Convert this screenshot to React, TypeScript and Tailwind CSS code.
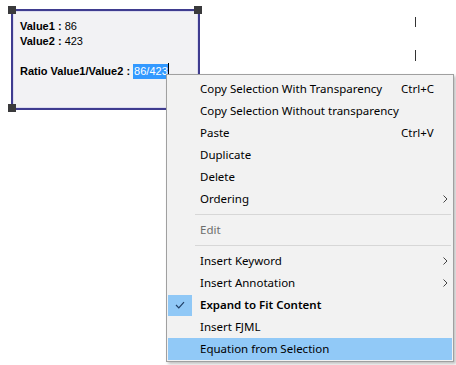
import React from "react";

type Item =
  | { kind: "item"; label: string; shortcut?: string; sub?: boolean; disabled?: boolean; bold?: boolean; checked?: boolean; active?: boolean }
  | { kind: "sep" };

const items: Item[] = [
  { kind: "item", label: "Copy Selection With Transparency", shortcut: "Ctrl+C" },
  { kind: "item", label: "Copy Selection Without transparency" },
  { kind: "item", label: "Paste", shortcut: "Ctrl+V" },
  { kind: "item", label: "Duplicate" },
  { kind: "item", label: "Delete" },
  { kind: "item", label: "Ordering", sub: true },
  { kind: "sep" },
  { kind: "item", label: "Edit", disabled: true },
  { kind: "sep" },
  { kind: "item", label: "Insert Keyword", sub: true },
  { kind: "item", label: "Insert Annotation", sub: true },
  { kind: "item", label: "Expand to Fit Content", bold: true, checked: true },
  { kind: "item", label: "Insert FJML" },
  { kind: "item", label: "Equation from Selection", active: true },
];

function Chevron() {
  return (
    <svg width="5" height="8" viewBox="0 0 5 8" className="absolute right-[4px] top-[7px]">
      <path d="M0.5 0.5 L4 4 L0.5 7.5" fill="none" stroke="#444" strokeWidth="1" />
    </svg>
  );
}

function Check() {
  return (
    <div className="w-[24px] h-[21px] bg-[#90c8f6] flex items-center justify-center">
      <svg width="10" height="8" viewBox="0 0 10 8">
        <path d="M1 4 L3.8 6.8 L9 1.2" fill="none" stroke="#1f3f66" strokeWidth="1.2" />
      </svg>
    </div>
  );
}

function Handle({ cls }: { cls: string }) {
  return <div className={`absolute w-[8px] h-[8px] bg-[#3a3a3c] ${cls}`} />;
}

export default function App() {
  return (
    <div
      className="relative w-[456px] h-[365px] bg-white overflow-hidden"
      style={{ fontFamily: "'Liberation Sans', Arial, sans-serif" }}
    >
      {/* text box on canvas */}
      <div className="absolute left-[11px] top-[9px] w-[189px] h-[101px] border-2 border-[#3f3c8f] bg-[#f2f2f4]">
        <div className="absolute inset-0 border border-[#dcdcee]" />
        <div className="relative pl-[7px] pt-[8px] text-[11px] leading-[15px] text-black">
          <div>
            <span className="font-bold">Value1 :</span> 86
          </div>
          <div>
            <span className="font-bold">Value2 :</span> 423
          </div>
          <div className="h-[15px]" />
          <div className="flex items-center">
            <span className="font-bold whitespace-pre">Ratio Value1/Value2 : </span>
            <span className="bg-[#3399ff] text-white leading-[15px] pl-[1px]">86/423</span>
            <span className="w-px h-[14px] bg-black -mt-[4px]" />
          </div>
        </div>
      </div>
      <Handle cls="left-[8px] top-[6px]" />
      <Handle cls="left-[194px] top-[6px]" />
      <Handle cls="left-[8px] top-[104px]" />

      {/* stray cursor marks */}
      <div className="absolute left-[415px] top-[17px] w-px h-[10px] bg-[#333]" />
      <div className="absolute left-[415px] top-[50px] w-px h-[11px] bg-[#333]" />

      {/* context menu */}
      <div
        className="absolute left-[166px] top-[74px] w-[288px] border border-[#a0a0a0] bg-[#f2f2f2] pt-[3px] pb-[1px] px-[1px] text-black shadow-[2px_2px_3px_rgba(0,0,0,0.25)]"
        style={{ fontFamily: "'Noto Sans', 'Open Sans', sans-serif" }}
      >
        {items.map((it, i) =>
          it.kind === "sep" ? (
            <div key={i} className="h-[9px] flex items-center pl-[27px] pr-[1px]">
              <div className="h-px flex-1 bg-[#d7d7d7]" />
            </div>
          ) : (
            <div
              key={i}
              className={`relative h-[22px] flex items-center text-[11.5px] ${it.active ? "bg-[#91c9f7]" : ""} ${it.disabled ? "text-[#6d6d6d]" : ""} ${it.bold ? "font-semibold" : ""}`}
            >
              <div className="w-[32px] flex items-center justify-start">
                {it.checked ? <Check /> : null}
              </div>
              <div className="w-[201px] whitespace-nowrap">{it.label}</div>
              {it.shortcut ? <div className="whitespace-nowrap">{it.shortcut}</div> : null}
              {it.sub ? <Chevron /> : null}
            </div>
          )
        )}
      </div>
    </div>
  );
}
